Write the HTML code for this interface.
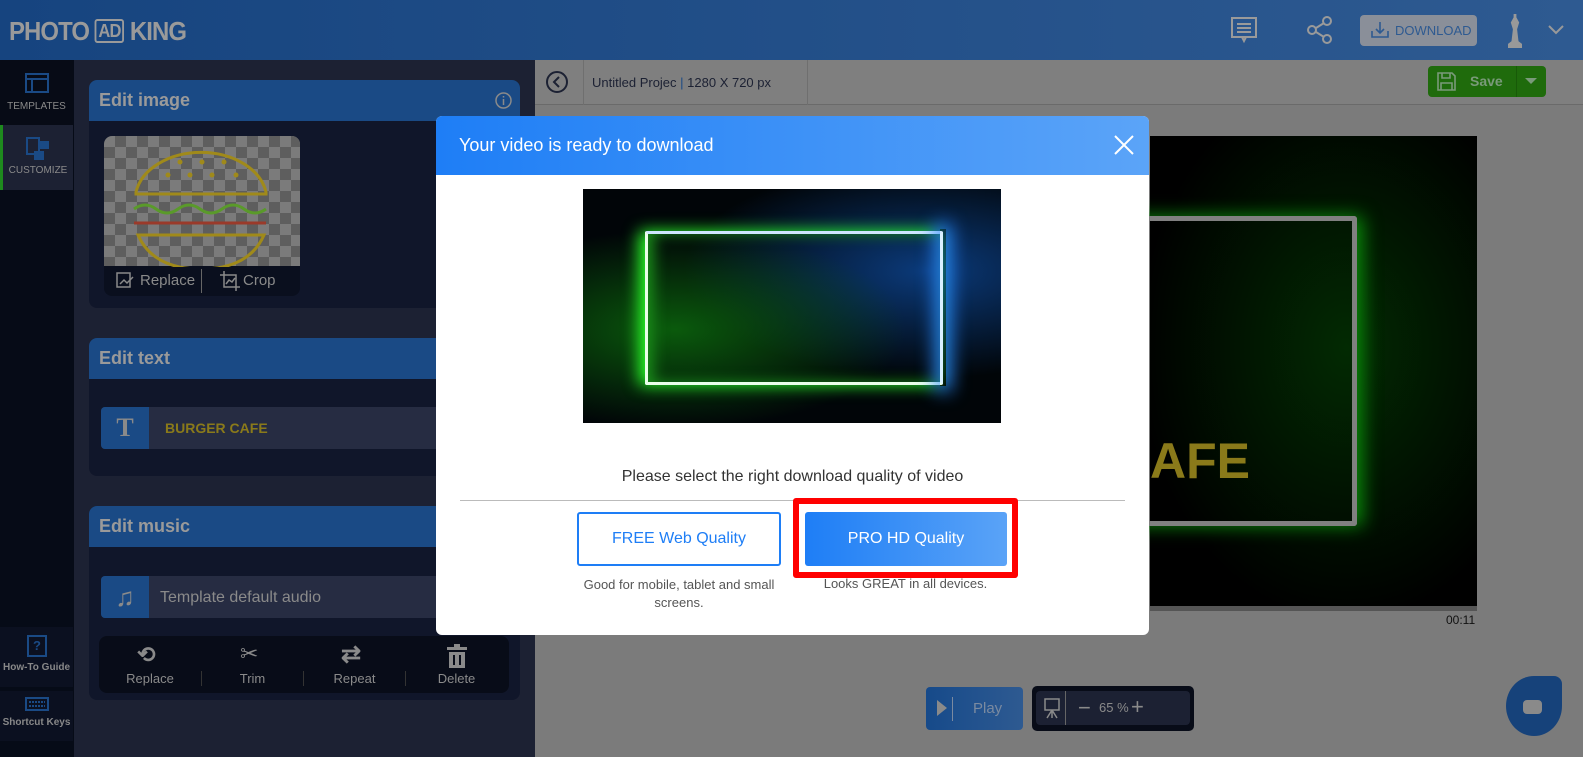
<!DOCTYPE html>
<html><head><meta charset="utf-8"><style>
*{margin:0;padding:0;box-sizing:border-box}
body{width:1583px;height:757px;overflow:hidden;position:relative;font-family:"Liberation Sans",sans-serif;background:#7b7b7b}
.abs{position:absolute}
.hdr{left:0;top:0;width:1583px;height:60px;background:linear-gradient(90deg,#16447f,#2e5a91);}
.logo{left:9px;top:16px;font-size:26px;font-weight:bold;color:#9a9a9a;letter-spacing:-1px;transform:scaleX(0.92);transform-origin:left}
.rail{left:0;top:60px;width:74px;height:697px;background:#060b17}
.railitem{position:absolute;left:0;width:73px;text-align:center;font-size:10px;color:#8a8a8a}
.panel{left:74px;top:60px;width:461px;height:697px;background:#1c2133}
.card{position:absolute;left:15px;width:431px;background:#10162a;border-radius:8px;overflow:hidden}
.ch{height:41px;background:#1a4a85;color:#9a9a9a;font-size:18px;font-weight:bold;padding:10px 10px}
.row{position:absolute;left:12px;width:420px;height:42px;background:#262c42;border-radius:4px;overflow:hidden}
.row .ic{position:absolute;left:0;top:0;width:48px;height:42px;background:#1a4a85;color:#8a8a8a;text-align:center;font-size:26px;line-height:42px;font-weight:bold}
.canvasbar{left:535px;top:60px;width:1048px;height:45px;background:#7f7f7f;border-bottom:1px solid #6a6a6a}
.modal{left:436px;top:116px;width:713px;height:519px;background:#fff;border-radius:6px;overflow:hidden}
.mh{height:59px;background:linear-gradient(90deg,#1e7ef6,#5ba4f8);color:#fff;font-size:18px;padding:19px 23px}
</style></head><body>
<div class="abs hdr"></div>
<div class="abs logo">PHOTO <span style="border:2px solid #9a9a9a;border-radius:3px;font-size:18px;padding:0 2px;vertical-align:3px">AD</span> KING</div>
<svg class="abs" style="left:1230px;top:16px" width="28" height="28" viewBox="0 0 28 28" fill="none" stroke="#9a9a9a" stroke-width="2"><rect x="2" y="2" width="24" height="19"/><path d="M7 8h14M7 12h14M7 16h14M12 21l2 4 2-4"/></svg>
<svg class="abs" style="left:1306px;top:15px" width="28" height="30" viewBox="0 0 28 30" fill="none" stroke="#9a9a9a" stroke-width="2"><circle cx="21" cy="6" r="4"/><circle cx="6" cy="15" r="4"/><circle cx="21" cy="24" r="4"/><path d="M10 13l8-5M10 17l8 5"/></svg>
<div class="abs" style="left:1360px;top:15px;width:117px;height:31px;background:#8a8f99;border-radius:4px;color:#2e5a91;font-size:13px;padding:8px 0 0 35px">DOWNLOAD</div>
<svg class="abs" style="left:1371px;top:21px" width="18" height="18" viewBox="0 0 18 18" fill="none" stroke="#2e5a91" stroke-width="1.6"><path d="M9 1v11M5 8l4 4 4-4M1 10v6h16v-6"/></svg>
<div class="abs" style="left:1508px;top:14px;width:14px;height:34px;background:#999;clip-path:polygon(40% 0,60% 0,60% 10%,80% 25%,65% 45%,75% 80%,100% 88%,100% 100%,0 100%,0 88%,25% 80%,35% 45%,20% 25%,40% 10%)"></div>
<svg class="abs" style="left:1548px;top:25px" width="16" height="10" fill="none" stroke="#999" stroke-width="2"><path d="M1 1l7 7 7-7"/></svg>

<div class="abs rail">
 <div class="railitem" style="top:0;height:65px;background:#070b16"><svg style="margin-top:13px" width="24" height="20" fill="none" stroke="#1a4a85" stroke-width="2"><rect x="1" y="1" width="22" height="18"/><path d="M1 6h22M7 6v13"/></svg><div style="margin-top:5px">TEMPLATES</div></div>
 <div class="railitem" style="top:65px;height:65px;background:#1c2133;border-left:3px solid #1e8a1e"><svg style="margin-top:12px" width="24" height="24" fill="#1a4a85"><rect x="1" y="1" width="12" height="16" fill="none" stroke="#1a4a85" stroke-width="2"/><rect x="12" y="4" width="11" height="8"/><rect x="8" y="14" width="10" height="9"/></svg><div style="margin-top:1px">CUSTOMIZE</div></div>
 <div class="railitem" style="top:567px;height:60px;background:#0b1020;font-weight:bold;color:#888"><svg style="margin-top:8px" width="20" height="24" fill="none" stroke="#1a4a85" stroke-width="2"><rect x="1" y="1" width="18" height="20"/><text x="6" y="15" font-size="13" fill="#1a4a85" stroke="none">?</text></svg><div>How-To Guide</div></div>
 <div class="railitem" style="top:631px;height:50px;background:#0b1020;font-weight:bold;color:#888"><svg style="margin-top:6px" width="24" height="14"><rect x="1" y="1" width="22" height="12" fill="none" stroke="#1a4a85" stroke-width="2"/><path d="M4 5h16M4 9h16" stroke="#1a4a85" stroke-width="2" stroke-dasharray="2 1"/></svg><div style="margin-top:3px">Shortcut Keys</div></div>
</div>

<div class="abs panel">
 <div class="card" style="top:20px;height:228px"><div class="ch">Edit image</div>
  <svg style="position:absolute;left:406px;top:12px" width="17" height="17" fill="none" stroke="#8a8a8a" stroke-width="1.5"><circle cx="8.5" cy="8.5" r="7.5"/><path d="M8.5 7v6M8.5 4v1.5"/></svg>
  <div style="position:absolute;left:15px;top:56px;width:196px;height:160px;border-radius:8px;overflow:hidden;background:#0a0f1e">
   <div style="height:130px;background-color:#7b7b7b;background-image:linear-gradient(45deg,#5e5e5e 25%,transparent 25%,transparent 75%,#5e5e5e 75%),linear-gradient(45deg,#5e5e5e 25%,transparent 25%,transparent 75%,#5e5e5e 75%);background-size:22px 22px;background-position:0 0,11px 11px"></div>
   <svg style="position:absolute;left:28px;top:6px" width="140" height="125" fill="none" stroke-width="3"><path d="M4 50 A66 48 0 0 1 134 50 L134 52 L4 52Z" stroke="#a08a1a"/><g fill="#a08a1a" stroke="none"><circle cx="48" cy="20" r="2.5"/><circle cx="70" cy="20" r="2.5"/><circle cx="92" cy="20" r="2.5"/><circle cx="36" cy="33" r="2.5"/><circle cx="58" cy="33" r="2.5"/><circle cx="80" cy="33" r="2.5"/><circle cx="104" cy="33" r="2.5"/></g><path d="M2 67 q11 -8 22 0 t22 0 t22 0 t22 0 t22 0 t22 0" stroke="#5a9a2a"/><path d="M2 81h132" stroke="#9a3a2a"/><path d="M6 93h126 q-15 34 -63 34 q-48 0 -63 -34z" stroke="#a08a1a"/></svg>
   <div style="position:absolute;top:130px;left:0;width:196px;height:30px;color:#8a8a8a;font-size:15px"><span style="position:absolute;left:36px;top:6px">Replace</span><span style="position:absolute;left:97px;top:3px;width:1px;height:24px;background:#666"></span><span style="position:absolute;left:139px;top:6px">Crop</span>
   <svg style="position:absolute;left:12px;top:6px" width="18" height="18" fill="none" stroke="#8a8a8a" stroke-width="1.5"><rect x="1" y="1" width="13" height="14"/><path d="M4 12l4-4 3 3 6-6"/></svg>
   <svg style="position:absolute;left:116px;top:5px" width="20" height="20" fill="none" stroke="#8a8a8a" stroke-width="1.5"><path d="M4 0v16h16M0 4h16v16"/><path d="M6 13l3-4 3 2 3-4"/></svg></div>
  </div>
 </div>
 <div class="card" style="top:278px;height:138px"><div class="ch">Edit text</div>
  <div class="row" style="top:69px"><div class="ic" style="font-family:'Liberation Serif',serif">T</div><span style="position:absolute;left:64px;top:13px;color:#8a7a1a;font-weight:bold;font-size:14px">BURGER CAFE</span></div>
 </div>
 <div class="card" style="top:446px;height:194px"><div class="ch">Edit music</div>
  <div class="row" style="top:70px"><div class="ic">♫</div><span style="position:absolute;left:59px;top:13px;color:#8a8a8a;font-size:16px">Template default audio</span></div>
  <div style="position:absolute;left:10px;top:130px;width:410px;height:57px;background:#080c18;border-radius:8px;color:#8a8a8a;font-size:13px">
   <div style="position:absolute;left:0;width:102px;text-align:center;top:35px">Replace</div>
   <div style="position:absolute;left:102px;width:102px;text-align:center;top:35px;border-left:1px solid #333">Trim</div>
   <div style="position:absolute;left:204px;width:102px;text-align:center;top:35px;border-left:1px solid #333">Repeat</div>
   <div style="position:absolute;left:306px;width:102px;text-align:center;top:35px;border-left:1px solid #333">Delete</div>
   <div style="position:absolute;left:38px;top:6px;font-size:22px;font-weight:bold">⟲</div>
   <div style="position:absolute;left:141px;top:5px;font-size:22px">✂</div>
   <div style="position:absolute;left:242px;top:4px;font-size:24px;font-weight:bold">⇄</div>
   <svg style="position:absolute;left:348px;top:8px" width="20" height="24" fill="#8a8a8a"><rect x="0" y="3" width="20" height="3"/><rect x="7" y="0" width="6" height="3"/><path d="M2 8h16v16H2z M6 11v10h2V11z M12 11v10h2V11z" fill-rule="evenodd"/></svg>
  </div>
 </div>
</div>

<div class="abs canvasbar"></div>
<svg class="abs" style="left:546px;top:71px" width="22" height="22" fill="none" stroke="#1c2133" stroke-width="2"><circle cx="11" cy="11" r="10"/><path d="M13 6l-5 5 5 5"/></svg>
<div class="abs" style="left:583px;top:60px;width:1px;height:45px;background:#6f6f6f"></div>
<div class="abs" style="left:592px;top:75px;font-size:13px;color:#1c2133">Untitled Projec <span style="color:#1a4a85">|</span> 1280 X 720 px</div>
<div class="abs" style="left:807px;top:60px;width:1px;height:45px;background:#6f6f6f"></div>
<div class="abs" style="left:1428px;top:66px;width:118px;height:31px;background:#1f6b0c;border-radius:4px;color:#7a9a7a;font-size:14px;font-weight:bold"><span style="position:absolute;left:42px;top:7px">Save</span><span style="position:absolute;left:88px;top:0;width:1px;height:31px;background:#185a08"></span><span style="position:absolute;left:97px;top:12px;border:6px solid transparent;border-top-color:#7a9a7a;border-bottom:0"></span>
<svg style="position:absolute;left:9px;top:6px" width="19" height="19" fill="none" stroke="#7a9a7a" stroke-width="1.6"><path d="M1 1h14l3 3v14H1z M5 1v5h8V1 M4 18v-7h11v7"/></svg></div>

<div class="abs" style="left:1150px;top:136px;width:327px;height:470px;background:radial-gradient(ellipse at 60% 45%,#022a02,#000 75%)"></div>
<div class="abs" style="left:1120px;top:216px;width:237px;height:310px;border:5px solid #808080;border-left:none;border-radius:0 3px 3px 0;box-shadow:6px 0 18px #0a8a0a"></div>
<div class="abs" style="left:1150px;top:432px;font-size:50px;font-weight:bold;color:#8a7a1a">AFE</div>
<div class="abs" style="left:1150px;top:606px;width:327px;height:5px;background:#555"></div>
<div class="abs" style="left:1446px;top:613px;font-size:12px;color:#111">00:11</div>

<div class="abs" style="left:926px;top:687px;width:97px;height:43px;background:linear-gradient(90deg,#164a8a,#2e5a91);border-radius:4px;color:#7a8aa0;font-size:15px"><span style="position:absolute;left:11px;top:13px;border:8px solid transparent;border-left:10px solid #8a8a8a;border-right:0"></span><span style="position:absolute;left:26px;top:10px;width:1px;height:24px;background:#7a8aa0"></span><span style="position:absolute;left:47px;top:13px">Play</span></div>
<div class="abs" style="left:1032px;top:686px;width:162px;height:45px;background:#080c18;border-radius:5px"><div style="position:absolute;left:4px;top:5px;width:154px;height:34px;background:#1c2133;border-radius:4px;color:#8a8a8a"><span style="position:absolute;left:29px;top:0;width:1px;height:34px;background:#666"></span><span style="position:absolute;left:42px;top:4px;font-size:22px">−</span><span style="position:absolute;left:63px;top:9px;font-size:13px">65 %</span><span style="position:absolute;left:95px;top:3px;font-size:22px">+</span>
<svg style="position:absolute;left:8px;top:7px" width="16" height="21" fill="none" stroke="#8a8a8a" stroke-width="1.5"><rect x="1" y="1" width="14" height="11"/><path d="M8 12l-5 8M8 12l5 8M8 12v8"/></svg></div></div>
<div class="abs" style="left:1506px;top:676px;width:56px;height:60px;background:#16427a;border-radius:50% 8px 50% 50%"><div style="position:absolute;left:17px;top:24px;width:19px;height:14px;background:#8a8a8a;border-radius:4px"></div></div>

<div class="abs modal">
 <div class="mh">Your video is ready to download</div>
 <svg style="position:absolute;left:678px;top:19px" width="20" height="20" stroke="#fff" stroke-width="2"><path d="M1 1l18 18M19 1L1 19"/></svg>
 <div style="position:absolute;left:147px;top:73px;width:418px;height:234px;background:radial-gradient(ellipse at 22% 60%,#0a5a0c,transparent 50%),radial-gradient(ellipse at 82% 35%,#0b3a7a,transparent 50%),#010508;overflow:hidden">
  <div style="position:absolute;left:62px;top:42px;width:298px;height:154px;border:3px solid #eaffea;border-radius:2px;box-shadow:-6px 0 16px #2aff2a,inset 6px 0 14px #1a8a1a;border-right-color:#d8f0ff;border-top-color:#cfe6ff"></div>
  <div style="position:absolute;left:357px;top:40px;width:6px;height:157px;box-shadow:0 0 18px 5px #2a8aff"></div>
 </div>
 <div style="position:absolute;left:0;width:713px;top:352px;text-align:center;font-size:16px;color:#333">Please select the right download quality of video</div>
 <div style="position:absolute;left:24px;top:384px;width:665px;height:1px;background:#bbb"></div>
 <div style="position:absolute;left:141px;top:396px;width:204px;height:54px;border:2px solid #1e7ef6;border-radius:3px;color:#1e7ef6;font-size:16px;text-align:center;line-height:50px">FREE Web Quality</div>
 <div style="position:absolute;left:141px;top:460px;width:204px;text-align:center;font-size:13px;color:#555;line-height:18px">Good for mobile, tablet and small screens.</div>
 <div style="position:absolute;left:357px;top:382px;width:225px;height:80px;border:6px solid #f00;border-radius:3px"></div>
 <div style="position:absolute;left:369px;top:396px;width:202px;height:54px;background:linear-gradient(90deg,#1e7ef6,#5aa3f7);border-radius:3px;color:#fff;font-size:16px;text-align:center;line-height:54px">PRO HD Quality</div>
 <div style="position:absolute;left:357px;top:460px;width:225px;text-align:center;font-size:13px;color:#555">Looks GREAT in all devices.</div>
</div>
</body></html>
